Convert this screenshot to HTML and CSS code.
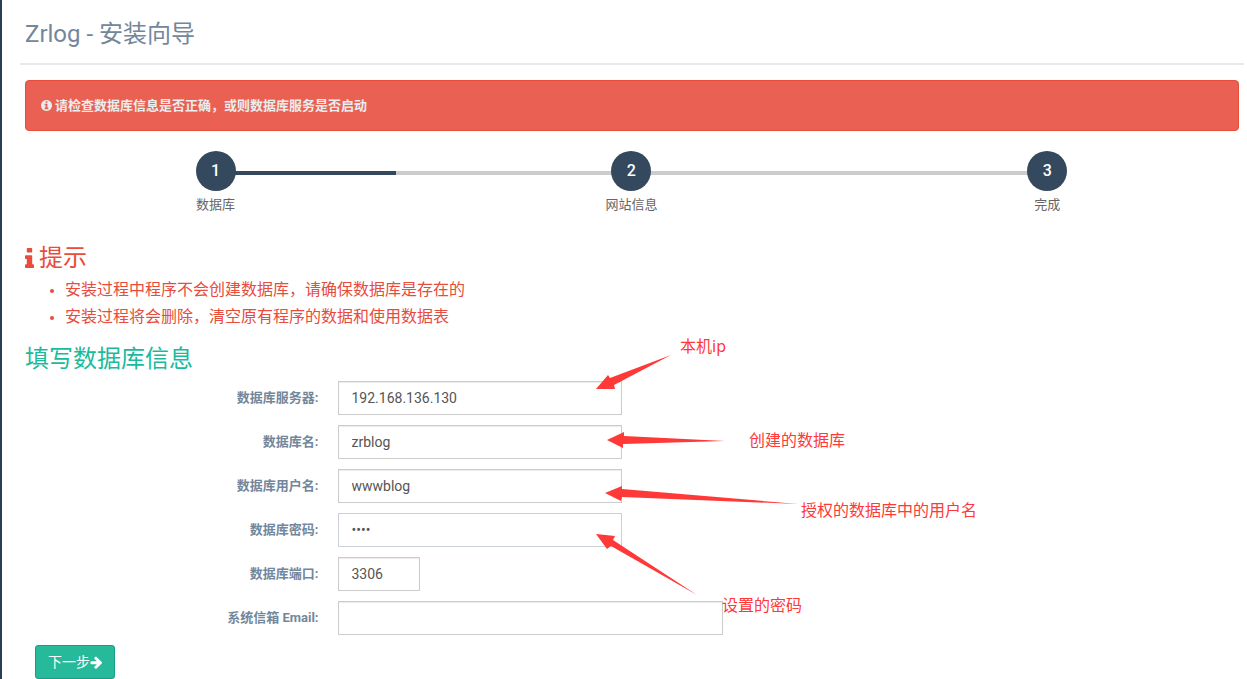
FILE: index.html
```html
<!DOCTYPE html>
<html lang="zh-CN">
<head>
<meta charset="utf-8">
<title>Zrlog - 安装向导</title>
<link rel="stylesheet" href="styles.css">
</head>
<body>
<main class="panel">
  <header class="panel-title"><h1 class="heading">Zrlog - 安装向导</h1></header>
  <div class="content">
    <div class="alert" role="alert">
      <svg class="alert-icon" viewBox="128 128 1536 1536" aria-hidden="true"><path d="M1152 1376v-160q0-14-9-23t-23-9h-96v-512q0-14-9-23t-23-9h-320q-14 0-23 9t-9 23v160q0 14 9 23t23 9h96v320h-96q-14 0-23 9t-9 23v160q0 14 9 23t23 9h448q14 0 23-9t9-23zm-128-896v-160q0-14-9-23t-23-9h-192q-14 0-23 9t-9 23v160q0 14 9 23t23 9h192q14 0 23-9t9-23zm640 416q0 209-103 385.500t-279.500 279.500-385.500 103-385.500-103-279.500-279.500-103-385.500 103-385.500 279.500-279.500 385.500-103 385.500 103 279.500 279.500 103 385.500z"/></svg>
      <strong>请检查数据库信息是否正确，或则数据库服务是否启动</strong>
    </div>

    <ol class="steps">
      <li class="step"><span class="step-no">1</span><span>数据库</span></li>
      <li class="step"><span class="step-no">2</span><span>网站信息</span></li>
      <li class="step"><span class="step-no">3</span><span>完成</span></li>
    </ol>

    <section class="tips">
      <h2 class="heading tips-heading">
        <svg class="tips-icon" viewBox="0 128 640 1408" aria-hidden="true"><path d="M640 1344v128q0 26-19 45t-45 19h-512q-26 0-45-19t-19-45v-128q0-26 19-45t45-19h64v-384h-64q-26 0-45-19t-19-45v-128q0-26 19-45t45-19h384q26 0 45 19t19 45v576h64q26 0 45 19t19 45zm-128-1152v192q0 26-19 45t-45 19h-256q-26 0-45-19t-19-45v-192q0-26 19-45t45-19h256q26 0 45 19t19 45z"/></svg>
        提示
      </h2>
      <ul class="tips-list">
        <li>安装过程中程序不会创建数据库，请确保数据库是存在的</li>
        <li>安装过程将会删除，清空原有程序的数据和使用数据表</li>
      </ul>
    </section>

    <h2 class="heading form-heading">填写数据库信息</h2>
    <form class="form">
      <div class="row"><label for="host">数据库服务器:</label><div class="col"><input id="host" type="text" value="192.168.136.130"></div></div>
      <div class="row"><label for="name">数据库名:</label><div class="col"><input id="name" type="text" value="zrblog"></div></div>
      <div class="row"><label for="user">数据库用户名:</label><div class="col"><input id="user" type="text" value="wwwblog"></div></div>
      <div class="row"><label for="pass">数据库密码:</label><div class="col"><input id="pass" class="plain" type="password" value="1234"></div></div>
      <div class="row"><label for="port">数据库端口:</label><div class="col col-small"><input id="port" type="text" value="3306"></div></div>
      <div class="row"><label for="email">系统信箱 Email:</label><div class="col col-wide"><input id="email" type="email"></div></div>
      <button class="next" type="button">下一步<svg class="next-icon" viewBox="64 128 1536 1611" aria-hidden="true"><path d="M1600 960q0 54-37 91l-651 651q-39 37-91 37-51 0-90-37l-75-75q-38-38-38-91t38-91l293-293h-704q-52 0-84.500-37.500t-32.500-90.500v-128q0-53 32.500-90.500t84.500-37.500h704l-293-294q-38-36-38-90t38-90l75-75q38-38 90-38 53 0 91 38l651 651q37 35 37 90z"/></svg></button>

      <svg class="arrows" viewBox="0 0 240 250" aria-hidden="true">
        <path d="M0 39 12 25 14 28 75 5 18 35 19 39z"/>
        <path d="M11 90 28 82 28 86 129 91 27 94 27 98z"/>
        <path d="M9 143 26 136 26 139 202 154 26 147 25 151z"/>
        <path d="M0 184 19 186 17 190 101 245 15 196 11 199z"/>
      </svg>
      <span class="note note-host">本机ip</span>
      <span class="note note-name">创建的数据库</span>
      <span class="note note-user">授权的数据库中的用户名</span>
      <span class="note note-pass">设置的密码</span>
    </form>
  </div>
</main>
</body>
</html>
```
FILE: styles.css
```css
* { box-sizing: border-box; }
body {
  margin: 0;
  color: #73879c;
  background: #fff;
  font: 13px/18px Roboto, "Noto Sans CJK SC", sans-serif;
}
.panel {
  min-height: 100vh;
  padding: 16px 3px 0 18px;
  border-left: 2px solid #2a3f54;
}
.panel-title {
  padding: 0 5px 11px;
  border-bottom: 2px solid #e6e9ed;
}
.heading { margin: 0; font-size: 24px; line-height: 36px; font-weight: 400; }
.content { padding: 15px 5px 0; }
.alert {
  display: flex;
  align-items: center;
  gap: 3px;
  height: 51px;
  padding: 0 15px;
  color: #e9edef;
  background: #ea6153;
  border: 1px solid #e74c3c;
  border-radius: 4px;
}
.alert-icon { width: 11px; height: 11px; fill: currentColor; }

.steps {
  position: relative;
  display: flex;
  justify-content: space-between;
  margin: 20px 0 0;
  padding: 0 12.5% 0 12.4%;
  list-style: none;
  color: #666;
}
.steps::before {
  content: "";
  position: absolute;
  top: 20px;
  left: 16%;
  right: 16%;
  height: 4px;
  background: linear-gradient(to right, #34495e 21.4%, #ccc 21.4%);
}
.step {
  position: relative;
  display: flex;
  flex-direction: column;
  align-items: center;
  gap: 5px;
  width: 80px;
}
.step-no {
  width: 40px;
  border-radius: 50%;
  color: #fff;
  background: #34495e;
  font-size: 16px;
  font-weight: 500;
  line-height: 40px;
  text-align: center;
}

.tips { margin-top: 26px; color: #e74c3c; }
.tips-heading { display: flex; align-items: center; gap: 5px; }
.tips-icon { width: 9px; height: 20px; fill: currentColor; }
.tips-list {
  margin: 0;
  padding-left: 40px;
  font-size: 16px;
  line-height: 27px;
}
.tips-list li::marker { font-size: 14px; }

.form-heading { margin: 11px 0 4px; color: #1abb9c; }
.form {
  position: relative;
  display: flex;
  flex-direction: column;
  align-items: stretch;
  gap: 10px;
}
.row { display: flex; align-items: center; }
.row label { width: 25%; padding-right: 10px; font-weight: 700; text-align: right; }
.col { width: 25%; padding: 0 10px 0 9px; }
.col-small { width: 8.333%; }
.col-wide { width: 33.333%; }
.col input {
  display: block;
  width: 100%;
  height: 34px;
  padding: 6px 12px 6px 13px;
  color: #555;
  background: #fff;
  border: 1px solid #ccc;
  border-radius: 0;
  box-shadow: inset 0 1px 1px rgba(0, 0, 0, 0.08);
  font: 14px/20px Roboto, "Noto Sans CJK SC", sans-serif;
}
.col .plain { border-color: #ccd0d7; box-shadow: none; }
.next {
  display: flex;
  align-items: center;
  align-self: flex-start;
  height: 34px;
  margin-left: 10px;
  padding: 0 12px;
  color: #fff;
  background: #26b99a;
  border: 1px solid #169f85;
  border-radius: 3px;
  font: 14px/20px Roboto, "Noto Sans CJK SC", sans-serif;
}
.next-icon { width: 12px; height: 13px; fill: currentColor; }

.arrows {
  position: absolute;
  top: -31px;
  left: 571px;
  width: 240px;
  height: 250px;
  fill: #ff3838;
}
.note {
  position: absolute;
  color: #ff3838;
  font: 16px/24px "Noto Sans", "Noto Sans CJK SC", sans-serif;
  white-space: nowrap;
}
.note-host { top: -47px; left: 655px; }
.note-name { top: 47px; left: 724px; }
.note-user { top: 117px; left: 776px; }
.note-pass { top: 212px; left: 697px; }
```
